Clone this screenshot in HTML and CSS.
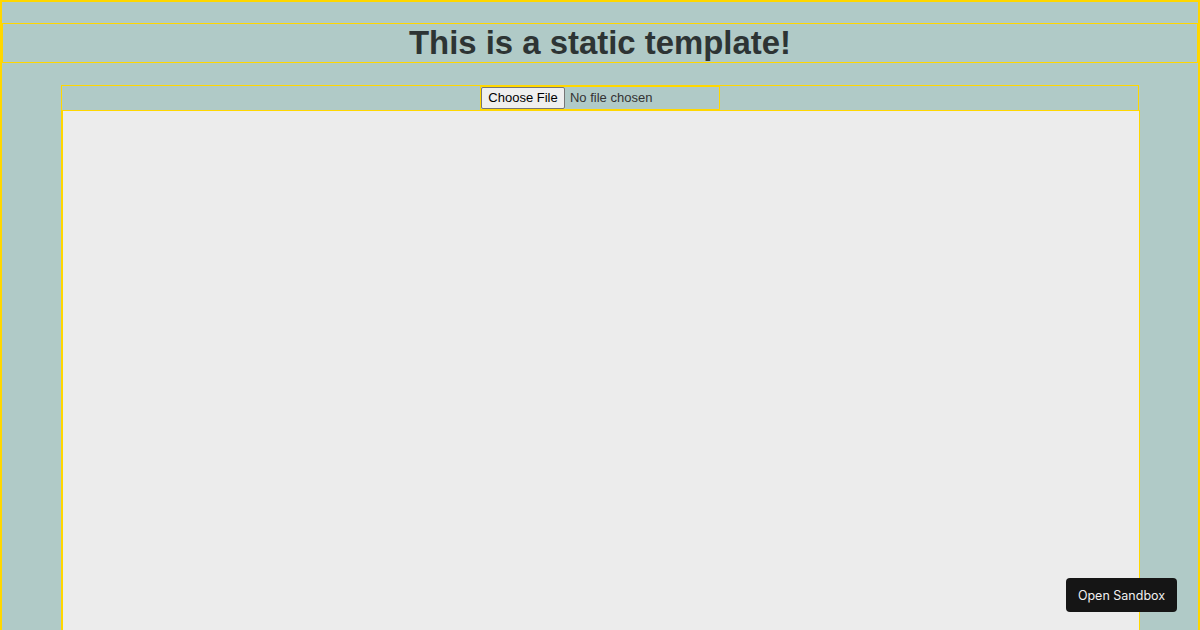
FILE: index.html
```html
<!DOCTYPE html>
<html lang="en">
<head>
<meta charset="utf-8">
<title>Static template</title>
<link rel="stylesheet" href="styles.css">
</head>
<body>
  <h1 class="title">This is a static template!</h1>
  <div class="container">
    <div class="file-input">
      <span class="file-button">Choose File</span>
      <span class="file-name">No file chosen</span>
    </div>
    <div class="canvas"></div>
  </div>
  <a class="open-sandbox" href="#">Open Sandbox</a>
</body>
</html>
```

FILE: styles.css
```css
html {
  background: #b0cac7;
}
body {
  margin: 0;
  border: 2px solid #ffd700;
  background: #b0cac7;
  color: #2d3434;
  font-family: "Liberation Sans", Arial, sans-serif;
  min-height: 700px;
}
.title {
  margin: 21px 0 22px;
  border: 1px solid #ffd700;
  font-size: 32.9px;
  line-height: 38px;
  font-weight: bold;
  text-align: center;
  color: #2d3434;
}
.container {
  width: 90%;
  margin: 0 auto;
  border: 1px solid #ffd700;
  display: flex;
  flex-direction: column;
  align-items: flex-start;
}
.file-input {
  align-self: center;
  box-sizing: border-box;
  width: 240px;
  height: 24px;
  border: 1px solid #ffd700;
  display: flex;
  align-items: center;
  font-size: 13px;
  line-height: 15px;
  color: #333333;
}
.file-button {
  box-sizing: border-box;
  width: 84px;
  height: 22px;
  margin-right: 5px;
  padding-bottom: 1px;
  background: #efefef;
  border: 1px solid #767676;
  border-radius: 2px;
  color: #000000;
  display: flex;
  align-items: center;
  justify-content: center;
}
.file-name {
  white-space: nowrap;
  padding-bottom: 1px;
}
.canvas {
  width: 100%;
  height: 600px;
  border: 1px solid #ffd700;
  background: #ececec;
}
.open-sandbox {
  position: fixed;
  right: 23px;
  bottom: 18px;
  box-sizing: border-box;
  width: 111px;
  height: 34px;
  display: flex;
  align-items: center;
  justify-content: center;
  background: #151515;
  color: #f0f0f0;
  border-radius: 4px;
  font-family: Inter, "Liberation Sans", sans-serif;
  font-size: 12.5px;
  text-decoration: none;
}
```
